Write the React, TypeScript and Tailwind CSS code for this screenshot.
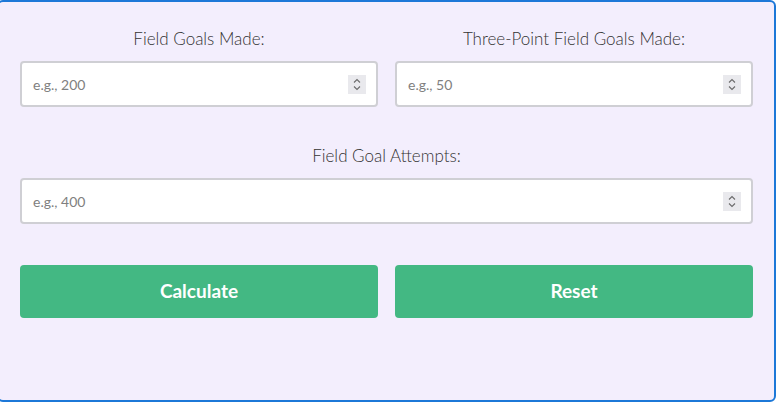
import { useState } from 'react';

function Spinner() {
  return (
    <div className="flex h-[19px] w-[18px] shrink-0 items-center justify-center bg-[#e9e9ed]">
      <svg width="10" height="15" viewBox="0 0 10 15" fill="none" stroke="#6b6b6b" strokeWidth="1.1">
        <path d="M2 5.5 L5 2.5 L8 5.5" />
        <path d="M2 9.5 L5 12.5 L8 9.5" />
      </svg>
    </div>
  );
}

function NumberField({
  label,
  placeholder,
  value,
  onChange,
}: {
  label: string;
  placeholder: string;
  value: string;
  onChange: (v: string) => void;
}) {
  return (
    <div className="flex flex-col">
      <label className="mb-[10px] h-6 text-center text-[17px] font-light leading-6 text-[#333333]">{label}</label>
      <div className="flex h-[46px] items-center rounded-[4px] border-2 border-[#cfcfd4] bg-white pl-[11px] pr-[10px]">
        <input
          type="text"
          inputMode="numeric"
          placeholder={placeholder}
          value={value}
          onChange={(e) => onChange(e.target.value)}
          className="min-w-0 flex-1 bg-transparent text-[14px] text-[#333] placeholder-[#808080] outline-none"
        />
        <Spinner />
      </div>
    </div>
  );
}

export default function App() {
  const [made, setMade] = useState('');
  const [threes, setThrees] = useState('');
  const [attempts, setAttempts] = useState('');

  const reset = () => {
    setMade('');
    setThrees('');
    setAttempts('');
  };

  return (
    <div className="h-[402px] w-[776px] overflow-hidden bg-white font-['Lato',sans-serif]">
      <div className="-ml-[3px] h-[402px] w-[779px] rounded-[6px] border-2 border-[#1c78d8] bg-[#f3eefd] px-[21px] pt-[25px]">
        <div className="grid grid-cols-2 gap-x-[17px]">
          <NumberField label="Field Goals Made:" placeholder="e.g., 200" value={made} onChange={setMade} />
          <NumberField label="Three-Point Field Goals Made:" placeholder="e.g., 50" value={threes} onChange={setThrees} />
        </div>

        <div className="mt-[37px]">
          <NumberField label="Field Goal Attempts:" placeholder="e.g., 400" value={attempts} onChange={setAttempts} />
        </div>

        <div className="mt-[41px] grid grid-cols-2 gap-x-[17px]">
          <button className="h-[53px] rounded-[4px] bg-[#43b883] text-[19px] font-bold text-white">Calculate</button>
          <button onClick={reset} className="h-[53px] rounded-[4px] bg-[#43b883] text-[19px] font-bold text-white">
            Reset
          </button>
        </div>
      </div>
    </div>
  );
}
